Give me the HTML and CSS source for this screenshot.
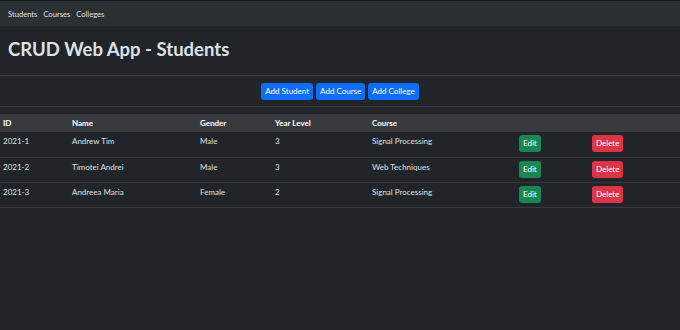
FILE: index.html
```html
<!DOCTYPE html>
<html lang="en">
<head>
<meta charset="utf-8">
<title>CRUD Web App - Students</title>
<link rel="stylesheet" href="styles.css">
</head>
<body>
<nav class="navbar">
  <a class="nav-link" href="#">Students</a>
  <a class="nav-link" href="#">Courses</a>
  <a class="nav-link" href="#">Colleges</a>
</nav>
<h1 class="title">CRUD Web App - Students</h1>
<hr class="rule">
<div class="actions">
  <button class="btn btn-primary">Add Student</button>
  <button class="btn btn-primary">Add Course</button>
  <button class="btn btn-primary">Add College</button>
</div>
<hr class="rule rule-bottom">
<table class="students">
  <colgroup>
    <col class="c-id"><col class="c-name"><col class="c-gender"><col class="c-year"><col class="c-course"><col class="c-edit"><col class="c-del">
  </colgroup>
  <thead>
    <tr><th>ID</th><th>Name</th><th>Gender</th><th>Year Level</th><th>Course</th><th></th><th></th></tr>
  </thead>
  <tbody>
    <tr><td>2021-1</td><td>Andrew Tim</td><td>Male</td><td>3</td><td>Signal Processing</td><td><button class="btn btn-success">Edit</button></td><td><button class="btn btn-danger">Delete</button></td></tr>
    <tr><td>2021-2</td><td>Timotei Andrei</td><td>Male</td><td>3</td><td>Web Techniques</td><td><button class="btn btn-success">Edit</button></td><td><button class="btn btn-danger">Delete</button></td></tr>
    <tr><td>2021-3</td><td>Andreea Maria</td><td>Female</td><td>2</td><td>Signal Processing</td><td><button class="btn btn-success">Edit</button></td><td><button class="btn btn-danger">Delete</button></td></tr>
  </tbody>
</table>
</body>
</html>
```
FILE: styles.css
```css
html, body {
  margin: 0;
  padding: 0;
  background: #212529;
  color: #dee2e6;
  font-family: Lato, "Open Sans", sans-serif;
  font-size: 8px;
}
.navbar {
  border-top: 1px solid #17172a;
  background: #2b3035;
  height: 25px;
  display: flex;
  align-items: center;
  gap: 6px;
  padding-left: 8px;
}
.nav-link {
  color: #dee2e6;
  text-decoration: none;
  font-size: 7.6px;
}
.title {
  margin: 0;
  padding: 10px 8px 0;
  height: 38px;
  box-sizing: border-box;
  font-size: 18.5px;
  font-weight: 700;
  line-height: 27px;
  color: #dee2e6;
}
.rule {
  margin: 11px 0 0;
  border: 0;
  border-top: 1px solid #3a3f44;
  height: 0;
}
.rule-bottom {
  margin: 0 0 7px;
}
.actions {
  display: flex;
  justify-content: center;
  gap: 3px;
  padding: 7px 0 6px;
}
.btn {
  font-family: inherit;
  font-size: 8px;
  line-height: 11px;
  border: 0;
  border-radius: 3px;
  color: #fff;
  padding: 3px 4px;
  height: 17px;
}
.btn-primary { background: #0d6efd; }
.btn-success { background: #198754; }
.btn-danger { background: #dc3545; }
.students {
  width: 100%;
  border-collapse: collapse;
  table-layout: fixed;
}
.c-id { width: 69px; }
.c-name { width: 128px; }
.c-gender { width: 75px; }
.c-year { width: 97px; }
.c-course { width: 147px; }
.c-edit { width: 73px; }
.c-del { width: 91px; }
.students th {
  background: #373b3e;
  text-align: left;
  font-weight: 700;
  height: 18px;
  padding: 0 3px;
  color: #fff;
}
.students td {
  height: 25px;
  padding: 4px 3px 0;
  vertical-align: top;
  border-bottom: 1px solid #373b3e;
  box-sizing: border-box;
}
.students td .btn {
  margin-top: -1px;
}
```
